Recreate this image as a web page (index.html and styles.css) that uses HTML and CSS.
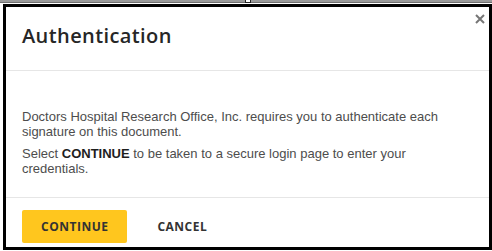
FILE: index.html
```html
<!DOCTYPE html>
<html lang="en">
<head>
    <meta charset="UTF-8">
    <meta name="viewport" content="width=device-width, initial-scale=1.0">
    <title>Authentication</title>
    <link rel="stylesheet" href="styles.css">
</head>
<body>
    <div class="topbar"><span class="handle"></span></div>

    <div class="modal">
        <button class="close" type="button" aria-label="Close">
            <svg width="10" height="10" viewBox="0 0 10 10">
                <path d="M1 1 L9 9 M9 1 L1 9" stroke="#767676" stroke-width="2" fill="none"/>
            </svg>
        </button>

        <header class="modal-header">
            <h1>Authentication</h1>
        </header>

        <section class="modal-body">
            <p>Doctors Hospital Research Office, Inc. requires you to authenticate each signature on this document.</p>
            <p>Select <b>CONTINUE</b> to be taken to a secure login page to enter your credentials.</p>
        </section>

        <footer class="modal-footer">
            <button class="btn btn-primary" type="button">CONTINUE</button>
            <button class="btn btn-link" type="button">CANCEL</button>
        </footer>
    </div>
</body>
</html>
```

FILE: styles.css
```css
html, body { margin: 0; height: 251px; overflow: hidden; background: #fff; }
body { font-family: "Liberation Sans", Arial, sans-serif; }

.topbar { position: relative; height: 2px; background: #9a9a9a; border-bottom: 1px solid #6e6e6e; margin-bottom: 1px; }
.topbar .handle { position: absolute; left: 245px; top: 0; width: 4px; height: 2px; background: #fff; border: 1px solid #222; border-top: none; }

.modal { position: relative; margin-left: 3px; width: 483px; height: 240px; border: 3px solid #000; overflow: hidden; }

.close { position: absolute; top: 7px; right: 4px; padding: 0; border: none; background: none; width: 10px; height: 10px; cursor: pointer; }
.close svg { display: block; }

.modal-header { padding: 15px 16px 20px; border-bottom: 1px solid #e6e6e6; }
.modal-header h1 { margin: 0; font-family: "Open Sans", sans-serif; font-size: 20px; font-weight: 600; line-height: 28px; letter-spacing: 0.4px; color: #262626; }

.modal-body { padding: 38px 16px 21px; border-bottom: 1px solid #e6e6e6; }
.modal-body p { margin: 0 0 7px; font-size: 13px; line-height: 15px; color: #4d4d4d; }
.modal-body p:last-child { margin-bottom: 0; }
.modal-body b { color: #1e1e1e; line-height: 1; }

.modal-footer { display: flex; gap: 11px; padding: 12px 16px; }
.btn { height: 33px; padding: 0 19px; border: none; border-radius: 2px; font-family: "Open Sans", sans-serif; font-size: 12px; font-weight: 700; letter-spacing: 0.5px; color: #333; cursor: pointer; }
.btn-primary { background: #ffc61e; }
.btn-link { background: none; }
```
